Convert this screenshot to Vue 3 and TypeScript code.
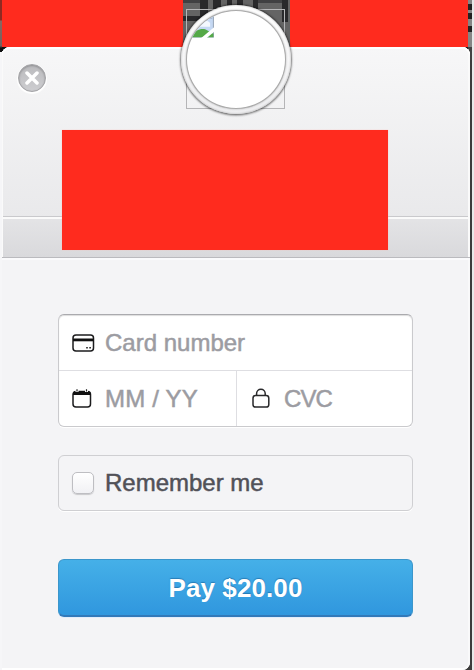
<script setup lang="ts">
  import { ref, computed } from "vue";

  const cardNumber = ref<string>("");
  const expiry = ref<string>("");
  const cvc = ref<string>("");
  const remember = ref<boolean>(false);

  const amount = 20;
  const payLabel = computed(() => {
    return `Pay $${amount.toFixed(2)}`;
  });
</script>

<template>
  <div class="screen">
    <div class="backdrop">
      <div class="edge"></div>
      <div class="red left"></div>
      <svg class="texture" width="107" height="60" viewBox="0 0 107 60">
        <rect width="107" height="60" fill="#646464" />
        <path
          d="M17 0h8v21h-8zM30 0h8v16h-8zM44 0h5v14h-5zM54 0h6v9h-6zM0 16h18v5H0zM70 0h5v14h-5zM99 0h6v22h-6z"
          fill="#29292b"
        />
        <path d="M0 0h17v3H0zM75 0h24v3H75z" fill="#404042" />
      </svg>
      <div class="red right"></div>
      <svg class="side" width="4" height="60" viewBox="0 0 4 60">
        <rect width="4" height="60" fill="#858585" />
        <path d="M0 4h4v6H0zM0 13h4v6H0zM0 26h4v6H0z" fill="#222" />
        <path d="M0 47h4v13H0z" fill="#444" />
      </svg>
    </div>

    <div class="modal">
      <div class="header">
        <button class="close-button" aria-label="Close">
          <svg width="14" height="14" viewBox="0 0 14 14">
            <path d="M2 2l10 10M12 2L2 12" stroke="#fff" stroke-width="3.5" stroke-linecap="round" />
          </svg>
        </button>
        <div class="avatar-frame"></div>
        <div class="avatar">
          <div class="avatar-image">
            <svg width="30" height="25" viewBox="0 0 27 29" preserveAspectRatio="none">
              <path d="M2 3h20v25H2z" fill="#c5d8f3" stroke="#9eabbc" />
              <path d="M3 4h18v3H3z" fill="#a9bad0" />
              <path d="M6 15c0-3 3-4 5-3 1-4 7-4 8 0v4H6z" fill="#f4f8fe" />
              <path d="M2 28c2-7 8-11 13-9l7 5v4z" fill="#54a947" />
              <path d="M11 29l14-15v5L16 29z" fill="#fff" />
            </svg>
          </div>
        </div>
        <div class="title-block"></div>
        <div class="account-bar"></div>
      </div>

      <form class="form-container" @submit.prevent>
        <div class="card-fields">
          <label class="field number">
            <svg class="icon" width="23" height="22" viewBox="0 0 23 22">
              <rect x="1" y="3" width="20.5" height="16" rx="3" fill="none" stroke="#1c1c1e" stroke-width="1.5" />
              <path d="M1 6.5h20.5v2.8H1z" fill="#111" />
              <path d="M14.2 15h1.6v1.6h-1.6zM17.3 15h1.6v1.6h-1.6z" fill="#222" />
            </svg>
            <input v-model="cardNumber" placeholder="Card number" />
          </label>
          <label class="field expiry">
            <svg class="icon" width="23" height="22" viewBox="0 0 23 22">
              <rect x="1" y="3.5" width="17.5" height="15.5" rx="3" fill="none" stroke="#1c1c1e" stroke-width="1.5" />
              <path d="M1 7V6q0-3 3-3h11.5q3 0 3 3v1z" fill="#111" />
              <path d="M5 1v3M14.5 1v3" stroke="#fff" stroke-width="3" />
              <path d="M5 1.2v2.3M14.5 1.2v2.3" stroke="#222" stroke-width="1.2" />
            </svg>
            <input v-model="expiry" placeholder="MM / YY" />
          </label>
          <label class="field cvc">
            <svg class="icon" width="23" height="22" viewBox="0 0 23 22">
              <rect x="1" y="7.6" width="15.8" height="11.5" rx="2.6" fill="none" stroke="#29292b" stroke-width="1.5" />
              <path d="M4.6 7.6V5.6a4.3 4.3 0 0 1 8.6 0v2" fill="none" stroke="#29292b" stroke-width="1.5" />
            </svg>
            <input v-model="cvc" placeholder="CVC" />
          </label>
        </div>

        <label class="remember">
          <input v-model="remember" type="checkbox" />
          <span>Remember me</span>
        </label>

        <button class="pay-button">{{ payLabel }}</button>
      </form>
    </div>
  </div>
</template>

<style>
  body {
    background: #e9e9e9;
    overflow: hidden;
  }
</style>

<style scoped>
  .screen {
    box-sizing: border-box;
    position: relative;
    width: 472px;
    height: 670px;
    padding: 47px 2px 0;
    background: linear-gradient(90deg, #f6f6f8 10px, #3c3c3c 10px);
    font-family: "Liberation Sans", Arial, sans-serif;
  }
  .backdrop {
    position: absolute;
    top: 0;
    left: 0;
    display: flex;
    width: 472px;
    height: 60px;
    background: linear-gradient(90deg, transparent 10px, #222 10px);
  }
  .edge {
    width: 2px;
    height: 52px;
    background: linear-gradient(#8e2a22 20px, #886761 21px, #77615e 46px, #111 48px);
  }
  .red {
    height: 47px;
    background: #ff2b1e;
  }
  .left {
    width: 181px;
    /* dark corner behind the rounded modal */
    box-shadow: 0 4px #111;
  }
  .right {
    width: 178px;
  }
  .modal {
    position: relative;
    box-sizing: border-box;
    width: 468px;
    height: 623px;
    border-radius: 8px 8px 8px 0;
    background: #f4f4f6;
    box-shadow:
      inset -2px 0 #f9f9fa,
      inset 0 -2px #fff;
  }
  .header {
    display: flex;
    flex-direction: column;
    justify-content: flex-end;
    position: relative;
    box-sizing: border-box;
    height: 211px;
    border-bottom: 1px solid #bababe;
    border-radius: 8px 8px 0 0;
    background: linear-gradient(#f7f7f8, #e6e6e8);
    box-shadow:
      inset 0 2px #fff,
      inset 1px 0 #fafafa,
      inset -2px 0 #fafafa,
      0 2px #fafafc;
  }
  .account-bar {
    height: 40px;
    margin: 0 2px 0 1px;
    border-top: 1px solid #c9c9cc;
    background: linear-gradient(#e4e4e6, #d9d9dc);
    box-shadow: inset 0 2px #fafafa;
  }
  .title-block {
    position: absolute;
    top: 83px;
    left: 60px;
    width: 326px;
    height: 120px;
    background: #ff2b1e;
    box-shadow: 0 0 1px #ffb6b0;
  }
  .close-button {
    position: absolute;
    top: 17px;
    left: 16px;
    display: flex;
    align-items: center;
    justify-content: center;
    width: 28px;
    height: 28px;
    padding: 0;
    border: 1px solid #a3a3a6;
    border-radius: 50%;
    background: linear-gradient(#bbbbbe, #cdcdd0);
    box-shadow:
      inset 0 1px 2px #8e8e91,
      0 1px 1px 1px #fff;
  }
  .avatar-frame {
    position: absolute;
    top: -38px;
    left: 184px;
    box-sizing: border-box;
    width: 99px;
    height: 100px;
    border: 1px solid #b5b5b7;
  }
  .avatar {
    position: absolute;
    top: -42px;
    left: 179px;
    box-sizing: border-box;
    width: 110px;
    height: 109px;
    padding: 5px;
    border-radius: 50%;
    background: linear-gradient(#fff, #eeeef0);
    box-shadow:
      inset 0 0 2px #aaa,
      0 0 2px 1px rgba(0, 0, 0, 0.45),
      0 2px 2px rgba(0, 0, 0, 0.18);
  }
  .avatar-image {
    box-sizing: border-box;
    width: 100%;
    height: 100%;
    border: 1px solid #aaa;
    border-radius: 50%;
    background: #fff;
    overflow: hidden;
    box-shadow: 0 0 2px #aaa;
  }
  .avatar-image svg {
    display: block;
    margin: 2px 0 0 2px;
  }
  .form-container {
    display: flex;
    flex-direction: column;
    padding: 56px 56px 0;
    width: 355px;
  }
  .card-fields {
    display: grid;
    grid-template-columns: 178px 1fr;
    grid-template-rows: 56px 55px;
    height: 111px;
    border: 1px solid #cacacd;
    border-top-color: #aaaaae;
    border-radius: 6px;
    background: #fff;
    box-shadow:
      inset 0 1px 1px #ddd,
      0 1px #fff;
  }
  .field {
    display: flex;
    align-items: center;
    padding-left: 13px;
    min-width: 0;
  }
  .number {
    grid-column: 1 / 3;
    border-bottom: 1px solid #dedee2;
  }
  .expiry {
    border-right: 1px solid #dedee2;
  }
  .cvc {
    padding-left: 15px;
  }
  .icon {
    flex: none;
    margin-right: 10px;
  }
  .cvc .icon {
    margin-right: 9px;
  }
  .field input {
    flex: 1;
    min-width: 0;
    padding: 0;
    border: none;
    outline: none;
    background: none;
    color: #333;
    font: 24px "Liberation Sans", Arial, sans-serif;
  }
  .field input::placeholder {
    color: #9c9ca2;
    opacity: 1;
    -webkit-text-stroke: 0.5px #9c9ca2;
  }
  .expiry input {
    letter-spacing: 0.2px;
  }
  .cvc input {
    letter-spacing: -0.9px;
  }
  .remember {
    display: flex;
    align-items: center;
    box-sizing: border-box;
    height: 56px;
    margin-top: 28px;
    padding-left: 13px;
    border: 1px solid #cfcfd2;
    border-radius: 6px;
    color: #515158;
    font-size: 24px;
    -webkit-text-stroke: 0.5px #515158;
    box-shadow: 0 1px #fff;
  }
  .remember input {
    appearance: none;
    box-sizing: border-box;
    width: 22px;
    height: 22px;
    margin: 0 11px 0 0;
    border: 1px solid #bebec2;
    border-radius: 5px;
    background: linear-gradient(#fff, #f1f1f4);
    box-shadow: 0 1px 1px #c9c9cc;
  }
  .pay-button {
    height: 58px;
    margin-top: 48px;
    padding: 2px 0 0;
    border: 1px solid #3b96cb;
    border-bottom: 2px solid #3279b9;
    border-radius: 6px;
    background: linear-gradient(#45b0e8, #3097de);
    color: #fff;
    font: bold 26px "Liberation Sans", Arial, sans-serif;
    letter-spacing: 0.1px;
    text-shadow: 0 -1px 1px rgba(0, 50, 100, 0.35);
    box-shadow: 0 1px #e2ecfa;
  }
</style>
